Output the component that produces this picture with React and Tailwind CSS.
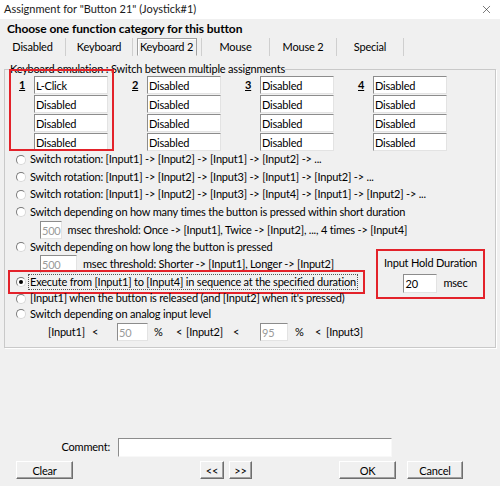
import { X } from 'lucide-react'

const font = { fontFamily: 'Lato, "Liberation Sans", sans-serif' }

function Field({ text, w = 'w-[74px]', h = 'h-[18px]', dim = false }) {
  return (
    <div className={`${w} ${h} bg-white border border-t-[#8c8c8c] border-l-[#8c8c8c] border-r-[#e3e3e3] border-b-[#e3e3e3] pl-[1px] flex items-center leading-none whitespace-nowrap ${dim ? 'text-[#9a9a9a]' : 'text-black'}`}>
      {text}
    </div>
  )
}

function Radio({ on = false }) {
  return (
    <span className="w-[10px] h-[10px] shrink-0 rounded-full bg-white border border-t-[#7a7a7a] border-l-[#7a7a7a] border-r-[#d8d8d8] border-b-[#d8d8d8] flex items-center justify-center">
      {on && <span className="w-[4px] h-[4px] rounded-full bg-black" />}
    </span>
  )
}

function Btn({ children, w }) {
  return (
    <button className={`${w} h-[18px] bg-[#f0f0f0] border border-t-white border-l-white border-r-[#6e6e6e] border-b-[#6e6e6e] shadow-[inset_-1px_-1px_0_#a0a0a0] text-[11px] leading-none text-black`}>
      {children}
    </button>
  )
}

const tabs = [
  ['Disabled', 'w-[66px]'],
  ['Keyboard', 'w-[67px]'],
  ['Keyboard 2', 'w-[69px]'],
  ['Mouse', 'w-[68px]'],
  ['Mouse 2', 'w-[67px]'],
  ['Special', 'w-[67px]'],
]

const options = [
  { h: 'h-[17px]', t: 'Switch rotation: [Input1] -> [Input2] -> [Input1] -> [Input2] -> ...' },
  { h: 'h-[18px]', t: 'Switch rotation: [Input1] -> [Input2] -> [Input3] -> [Input1] -> [Input2] -> ...' },
  { h: 'h-[17px]', t: 'Switch rotation: [Input1] -> [Input2] -> [Input3] -> [Input4] -> [Input1] -> [Input2] -> ...' },
  { h: 'h-[18px]', t: 'Switch depending on how many times the button is pressed within short duration' },
  { h: 'h-[18px]', field: 'msec threshold: Once -> [Input1], Twice -> [Input2], ..., 4 times -> [Input4]' },
  { h: 'h-[16px]', t: 'Switch depending on how long the button is pressed' },
  { h: 'h-[18px]', field: 'msec threshold: Shorter -> [Input1], Longer -> [Input2]' },
  { h: 'h-[18px]', t: 'Execute from [Input1] to [Input4] in sequence at the specified duration', on: true },
  { h: 'h-[15px]', t: "[Input1] when the button is released (and [Input2] when it's pressed)" },
  { h: 'h-[16px]', t: 'Switch depending on analog input level' },
]

export default function App() {
  const cols = [
    ['1', ['L-Click', 'Disabled', 'Disabled', 'Disabled']],
    ['2', ['Disabled', 'Disabled', 'Disabled', 'Disabled']],
    ['3', ['Disabled', 'Disabled', 'Disabled', 'Disabled']],
    ['4', ['Disabled', 'Disabled', 'Disabled', 'Disabled']],
  ]

  return (
    <div className="w-[500px] h-[486px] bg-[#f0f0f0] overflow-hidden flex flex-col text-[11px] tracking-[-0.2px] text-black" style={font}>
      {/* title bar */}
      <div className="h-[19px] bg-white flex items-center justify-between pl-[4px] pr-[7px] shrink-0">
        <span className="text-[11px] tracking-normal text-[#1a1a1a]">Assignment for "Button 21" (Joystick#1)</span>
        <X size={13} strokeWidth={1.1} color="#222" />
      </div>

      <div className="h-[19px] pl-[7px] flex items-center font-bold text-[12px] tracking-[-0.1px] whitespace-nowrap shrink-0">
        Choose one function category for this button
      </div>

      {/* tabs */}
      <div className="flex h-[18px] shrink-0">
        {tabs.map(([t, w]) => (
          <div key={t} className={`${w} border-r border-[#cfcfcf] flex items-center justify-center whitespace-nowrap`}>
            {t === 'Keyboard 2' ? (
              <span className="w-[60px] h-[18px] ml-[-1px] border border-t-[#a0a0a0] border-l-[#a0a0a0] border-r-[#a0a0a0] border-b-transparent shadow-[inset_1px_1px_0_#fff] flex items-center justify-center">
                {t}
              </span>
            ) : t}
          </div>
        ))}
      </div>

      {/* group */}
      <fieldset className="mx-[4px] mt-[6px] border border-[#c9c9c9] shadow-[1px_1px_0_#fff] pb-[5px]">
        <legend className="ml-[5px] leading-[14px] whitespace-nowrap">Keyboard emulation : Switch between multiple assignments</legend>

        <div className="relative flex pl-[14px]">
          {cols.map(([n, items]) => (
            <div key={n} className="w-[113px] flex">
              <span className="w-[15px] font-bold underline leading-[18px]">{n}</span>
              <div className="flex flex-col gap-[1px]">
                {items.map((v, i) => <Field key={i} text={v} />)}
              </div>
            </div>
          ))}
          <div className="absolute left-[4px] top-[-7px] w-[105px] h-[82px] border-2 border-[#e3222a]" />
        </div>

        <div className="flex">
          <div className="w-[371px] flex flex-col">
            {options.map((o, i) => (
              o.field ? (
                <div key={i} className={`${o.h} flex items-center pl-[35px] whitespace-nowrap`}>
                  <Field text="500" w="w-[37px]" dim />
                  <span className="ml-[6px]">{o.field}</span>
                </div>
              ) : (
                <div key={i} className={`${o.h} relative flex items-center pl-[11px] whitespace-nowrap`}>
                  <Radio on={o.on} />
                  {o.on ? (
                    <>
                      <span className="ml-[2px] px-[1px] leading-[14px] border border-dotted border-[#555]">{o.t}</span>
                      <div className="absolute left-[3px] top-[-3px] w-[357px] h-[24px] border-2 border-[#e3222a]" />
                    </>
                  ) : (
                    <span className="ml-[4px]">{o.t}</span>
                  )}
                </div>
              )
            ))}
            <div className="h-[20px] flex items-center pl-[43px] whitespace-nowrap">
              <span className="w-[44px]">[Input1]</span>
              <span className="w-[25px]">&lt;</span>
              <Field text="50" w="w-[31px]" dim />
              <span className="w-[28px] pl-[6px]">%</span>
              <span className="w-[10px]">&lt;</span>
              <span className="w-[47px]">[Input2]</span>
              <span className="w-[27px]">&lt;</span>
              <Field text="95" w="w-[28px]" dim />
              <span className="w-[27px] pl-[7px]">%</span>
              <span className="w-[11px]">&lt;</span>
              <span>[Input3]</span>
            </div>
          </div>

          <div className="w-[109px] h-[50px] mt-[98px] border-2 border-[#e3222a] flex flex-col items-center whitespace-nowrap">
            <span className="mt-[5px] leading-[14px]">Input Hold Duration</span>
            <div className="flex items-center mt-[4px] ml-[10px]">
              <Field text="20" w="w-[34px]" h="h-[19px]" />
              <span className="ml-[6px]">msec</span>
            </div>
          </div>
        </div>
      </fieldset>

      {/* comment */}
      <div className="flex items-center mt-[90px] shrink-0">
        <span className="w-[110px] text-right">Comment:</span>
        <div className="ml-[8px] w-[274px] h-[19px] bg-white border border-t-[#8c8c8c] border-l-[#8c8c8c] border-r-[#f8f8f8] border-b-[#f8f8f8]" />
      </div>

      <div className="flex items-center mt-[4px] pl-[16px] shrink-0">
        <Btn w="w-[57px]">Clear</Btn>
        <div className="ml-[127px] flex gap-[5px]">
          <Btn w="w-[24px]">&lt;&lt;</Btn>
          <Btn w="w-[23px]">&gt;&gt;</Btn>
        </div>
        <div className="ml-[87px] flex gap-[11px]">
          <Btn w="w-[57px]">OK</Btn>
          <Btn w="w-[56px]">Cancel</Btn>
        </div>
      </div>
    </div>
  )
}
